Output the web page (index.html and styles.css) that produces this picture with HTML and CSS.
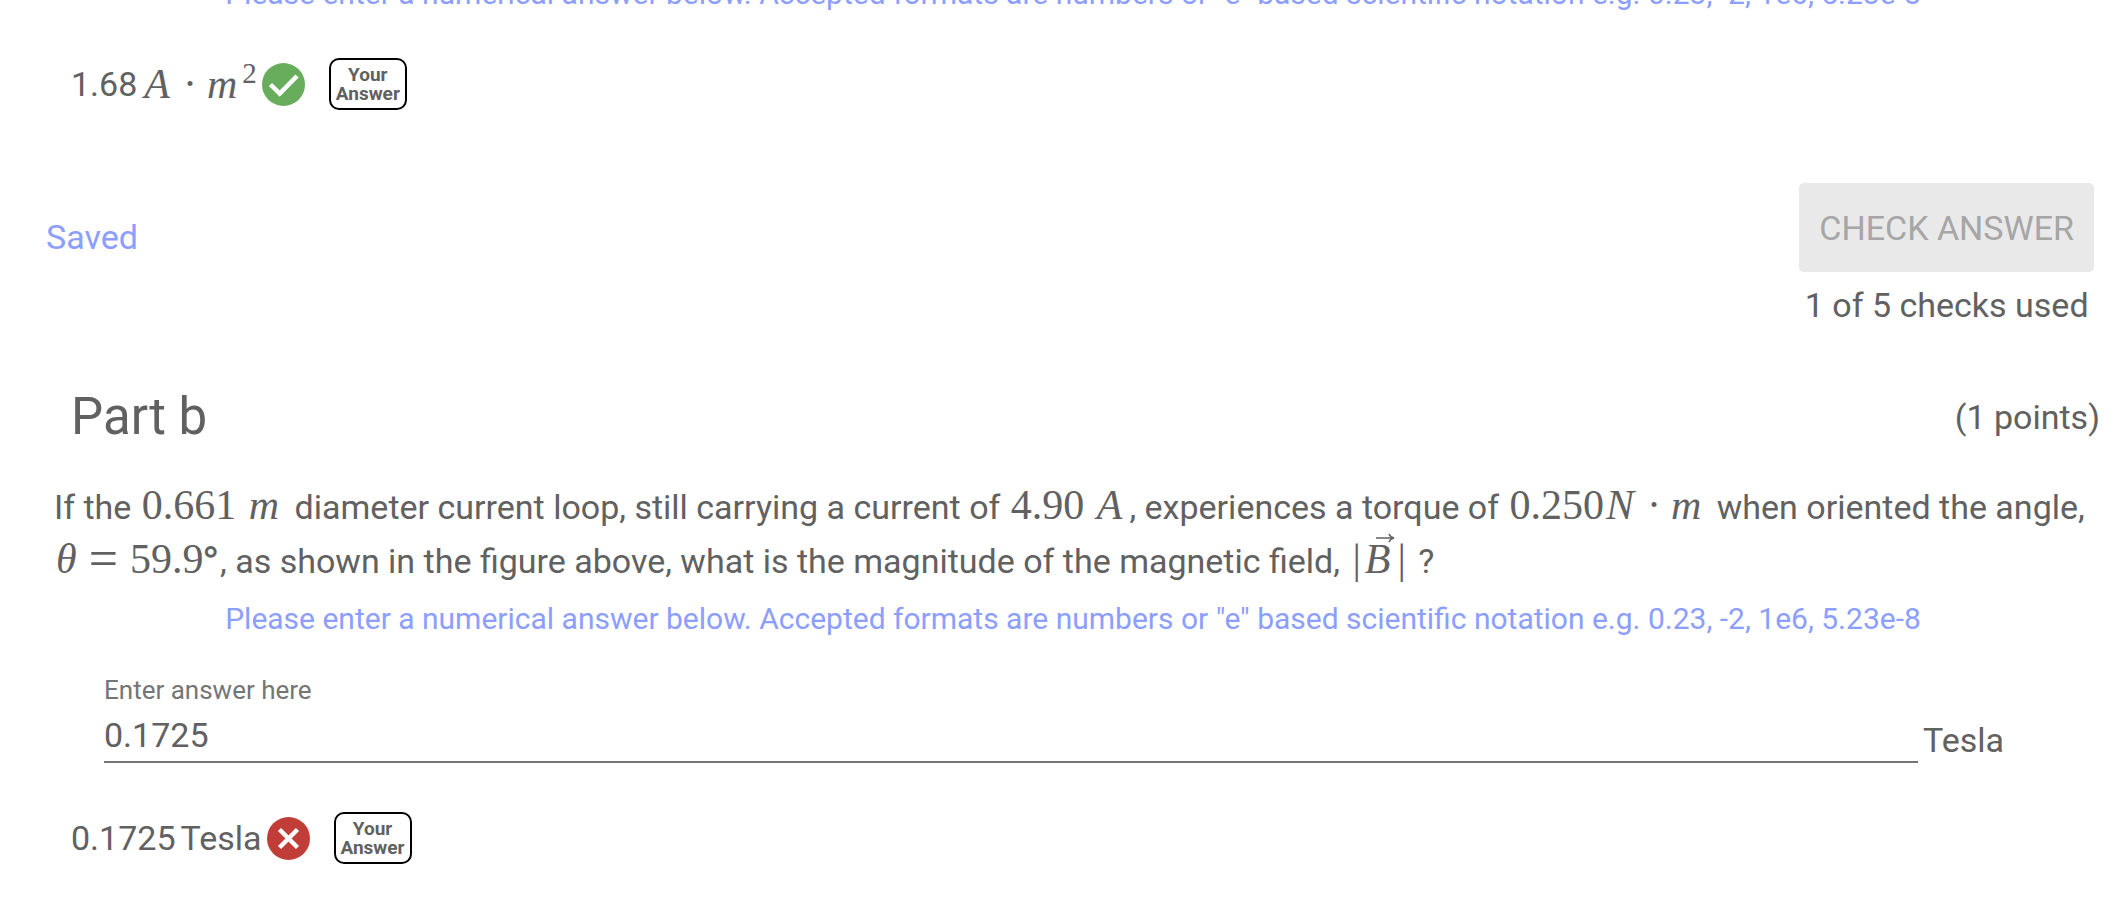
FILE: index.html
```html
<!DOCTYPE html>
<html lang="en">
<head>
  <meta charset="UTF-8">
  <meta name="viewport" content="width=device-width, initial-scale=1.0">
  <title>Magnetic Torque Problem</title>
  <link rel="stylesheet" href="styles.css">
</head>
<body>
  <main class="problem">
    <!-- Part a -->
    <section class="part">
      <p class="hint">Please enter a numerical answer below. Accepted formats are numbers or "e" based scientific notation e.g. 0.23, -2, 1e6, 5.23e-8</p>
      <div class="answer-row">
        <span class="answer-value">1.68</span>
        <span class="math"><i>A</i><span class="dot">·</span><i>m</i><sup>2</sup></span>
        <svg class="status-icon" viewBox="0 0 43 43" role="img" aria-label="Correct">
          <circle cx="21.5" cy="21.5" r="21.5" fill="#67ad5b"/>
          <path d="M8.500 21.500L17.700 30.500L35 13" fill="none" stroke="#fff" stroke-width="4.500"/>
        </svg>
        <span class="your-answer">Your<br>Answer</span>
      </div>
      <div class="actions">
        <span class="saved">Saved</span>
        <div class="check">
          <button class="check-button" type="button" disabled>CHECK ANSWER</button>
          <span class="check-count">1 of 5 checks used</span>
        </div>
      </div>
    </section>

    <!-- Part b -->
    <section class="part">
      <div class="part-header">
        <h2>Part b</h2>
        <span class="points">(1 points)</span>
      </div>
      <p class="question">If the <span class="math">0.661 <i>m</i></span> diameter current loop, still carrying a current of <span class="math">4.90 <i>A</i></span>, experiences a torque of <span class="math">0.250<i>N</i><span class="dot">·</span><i>m</i></span> when oriented the angle, <span class="math"><i class="theta">θ</i><span class="equals">=</span>59.9<span class="degree">∘</span></span>, as shown in the figure above, what is the magnitude of the magnetic field, <span class="math"><span class="bar">|</span><i class="vector">B<svg class="arrow" viewBox="0 0 20 10" aria-hidden="true"><path d="M1 5H18M14 1Q15 4 19 5Q15 6 14 9" fill="none" stroke="currentColor" stroke-width="1.500"/></svg></i><span class="bar">|</span></span> ?</p>
      <p class="hint">Please enter a numerical answer below. Accepted formats are numbers or "e" based scientific notation e.g. 0.23, -2, 1e6, 5.23e-8</p>
      <div class="answer-input">
        <div class="field">
          <label for="answer-b">Enter answer here</label>
          <input type="text" id="answer-b" value="0.1725">
        </div>
        <span class="unit">Tesla</span>
      </div>
      <div class="answer-row">
        <span class="answer-value">0.1725</span>
        <span class="answer-unit">Tesla</span>
        <svg class="status-icon" viewBox="0 0 43 43" role="img" aria-label="Incorrect">
          <circle cx="21.5" cy="21.5" r="21.5" fill="#c13d37"/>
          <path d="M12.500 12.500L30.500 30.500M30.500 12.500L12.500 30.500" fill="none" stroke="#fff" stroke-width="4.500"/>
        </svg>
        <span class="your-answer">Your<br>Answer</span>
      </div>
    </section>
  </main>
</body>
</html>
```
FILE: styles.css
```css
* {
  box-sizing: border-box;
}
body {
  margin: 0;
  background-color: #fff;
  color: #616161;
  font-family: Roboto, sans-serif;
  font-size: 34px;
  line-height: 44px;
  overflow: hidden;
}
/* the page sits scrolled down to the end of part a */
.problem {
  margin-top: -26px;
  padding: 0 24px 48px 46px;
}
.hint {
  margin: 0;
  color: #8c9eff;
  font-size: 30px;
  line-height: 40px;
  text-align: center;
}
.answer-row {
  display: flex;
  align-items: center;
  height: 52px;
  margin-top: 44px;
  padding-left: 25px;
}
.answer-value {
  margin-right: 5px;
}
.status-icon {
  width: 43px;
  height: 43px;
  margin: 0 24px 0 5px;
}
.your-answer {
  padding: 5px;
  border: 2px solid #000;
  border-radius: 10px;
  font-size: 19px;
  font-weight: 700;
  line-height: 19px;
  text-align: center;
}
.actions {
  display: flex;
  justify-content: space-between;
  align-items: flex-start;
  margin-top: 73px;
  padding-right: 6px;
}
.saved {
  padding-top: 32px;
  color: #8c9eff;
}
.check {
  display: flex;
  flex-direction: column;
  align-items: center;
  gap: 11px;
}
.check-button {
  height: 89px;
  padding: 0 20px;
  border: none;
  border-radius: 5px;
  background-color: #e9e9e9;
  color: #a6a6a6;
  font-family: inherit;
  font-size: 34px;
}
.part-header {
  display: flex;
  justify-content: space-between;
  align-items: center;
  margin-top: 60px;
  padding-left: 25px;
}
.part-header h2 {
  margin: 0;
  font-size: 51px;
  font-weight: 400;
  line-height: 60px;
}
.question {
  margin: 33px 0 11px;
  padding-left: 8px;
  line-height: 54px;
}

/* Formulas */
.math {
  font-family: "Liberation Serif", serif;
  font-size: 42px;
  line-height: 1;
  white-space: nowrap;
}
.question .math {
  padding: 0 2px;
}
.math i {
  padding: 0 5px 0 2px;
}
.math .theta {
  padding: 0;
}
.math sup {
  font-size: 29px;
  line-height: 0;
}
.dot {
  padding: 0 8px;
}
.equals {
  padding: 0 12px;
  font-size: 52px;
  line-height: 0;
  vertical-align: -3px;
}
.degree {
  margin: 0 -3px;
  font-family: "DejaVu Serif", serif;
  line-height: 0;
  vertical-align: 8px;
}
.bar {
  padding: 0 2px;
}
.vector {
  position: relative;
}
.arrow {
  position: absolute;
  top: -3px;
  left: 12px;
  width: 20px;
  height: 10px;
}

/* Answer box */
.answer-input {
  display: flex;
  align-items: flex-end;
  gap: 5px;
  margin: 35px 96px 49px 58px;
}
.answer-input + .answer-row {
  margin-top: 0;
}
.field {
  flex: 1;
  display: flex;
  flex-direction: column;
  gap: 9px;
}
.field label {
  color: #757575;
  font-size: 26px;
  line-height: 32px;
}
.field input {
  width: 100%;
  height: 48px;
  padding: 0 0 6px;
  border: none;
  border-bottom: 2px solid #757575;
  background: none;
  color: inherit;
  font-family: inherit;
  font-size: 34px;
  line-height: 40px;
  outline: none;
}
.unit {
  padding-bottom: 1px;
}
```
